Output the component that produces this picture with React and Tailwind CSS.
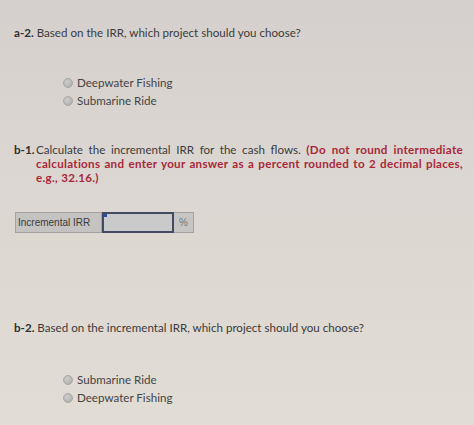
import React from "react";

function Radio({ label }) {
  return (
    <div className="flex items-center h-[18px]">
      <span className="w-[10px] h-[10px] rounded-full bg-[radial-gradient(circle_at_40%_35%,#cfcdcb,#acaaa8)] border border-[#a9a7a4] ml-[49px]" />
      <span className="ml-[4px] text-[11.6px] text-[#444]">{label}</span>
    </div>
  );
}

export default function App() {
  return (
    <div className="w-[474px] h-[425px] overflow-hidden bg-[linear-gradient(180deg,#d5d0cd_0%,#dbd6d1_40%,#e1dcd4_100%)] font-['Lato',sans-serif] text-[#3b3b3b] pt-[25px] pl-[14px] pr-[11px]">
      <p className="text-[11.6px] leading-[16px]">
        <b className="text-[#2e2e2e]">a-2.</b> Based on the IRR, which project should you choose?
      </p>
      <div className="mt-[33px]">
        <Radio label="Deepwater Fishing" />
        <Radio label="Submarine Ride" />
      </div>
      <div className="mt-[33px] flex text-[11.6px] leading-[14px]">
        <b className="w-[22px] shrink-0 whitespace-nowrap text-[#2e2e2e]">b-1.</b>
        <p className="flex-1 text-justify">
          Calculate the incremental IRR for the cash flows.{" "}
          <b className="text-[#a8283a] tracking-[0.3px]">
            (Do not round intermediate calculations and enter your answer as a percent rounded to 2 decimal places, e.g., 32.16.)
          </b>
        </p>
      </div>
      <div className="mt-[27px] ml-[1px] flex h-[21px] font-['Liberation_Sans',Arial,sans-serif]">
        <div className="w-[87px] bg-[#c4c3c1] border border-[#a3a2a0] text-[10px] text-[#3a3a3a] flex items-center pl-[2px]">
          Incremental IRR
        </div>
        <div className="relative w-[72px] bg-[#c9cac9] border-2 border-[#434a62]">
          <span className="absolute left-0 top-0 w-[3px] h-[3px] bg-[#2a4fa0]" />
        </div>
        <div className="w-[20px] bg-[#c6c5c3] border border-[#a3a2a0] border-l-0 text-[10px] text-[#777] flex items-center justify-center">
          %
        </div>
      </div>
      <p className="mt-[87px] text-[11.6px] leading-[16px]">
        <b className="text-[#2e2e2e]">b-2.</b> Based on the incremental IRR, which project should you choose?
      </p>
      <div className="mt-[35px]">
        <Radio label="Submarine Ride" />
        <Radio label="Deepwater Fishing" />
      </div>
    </div>
  );
}
